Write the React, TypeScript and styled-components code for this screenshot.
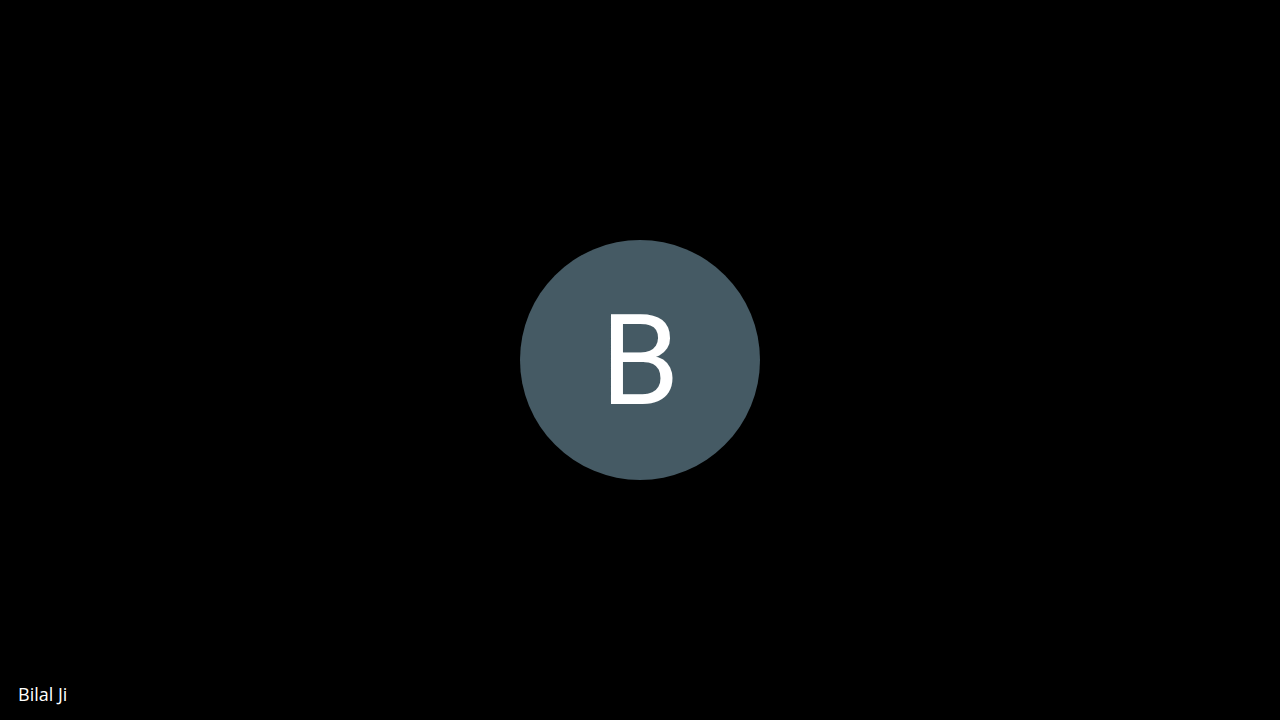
import styled, { createGlobalStyle } from "styled-components";

const GlobalStyle = createGlobalStyle`
  html, body {
    margin: 0;
    padding: 0;
    background: #000;
  }
`;

export default function App() {
  return (
    <>
      <GlobalStyle />
      <Tile>
        <Avatar>
          <Initial>B</Initial>
        </Avatar>
        <NameTag>Bilal Ji</NameTag>
      </Tile>
    </>
  );
}

const Tile = styled.div`
  position: relative;
  width: 1280px;
  height: 720px;
  background: #000;
  display: flex;
  align-items: center;
  justify-content: center;
  overflow: hidden;
`;

const Avatar = styled.div`
  width: 240px;
  height: 240px;
  border-radius: 50%;
  background-color: #455a64;
  display: flex;
  align-items: center;
  justify-content: center;
`;

const Initial = styled.span`
  font-family: Roboto, "Noto Sans", sans-serif;
  font-size: 127px;
  font-weight: 400;
  line-height: 1;
  color: #fff;
`;

const NameTag = styled.div`
  position: absolute;
  left: 18px;
  bottom: 15px;
  font-family: "Open Sans", "Noto Sans", sans-serif;
  font-size: 18px;
  line-height: 22px;
  color: #fff;
`;
